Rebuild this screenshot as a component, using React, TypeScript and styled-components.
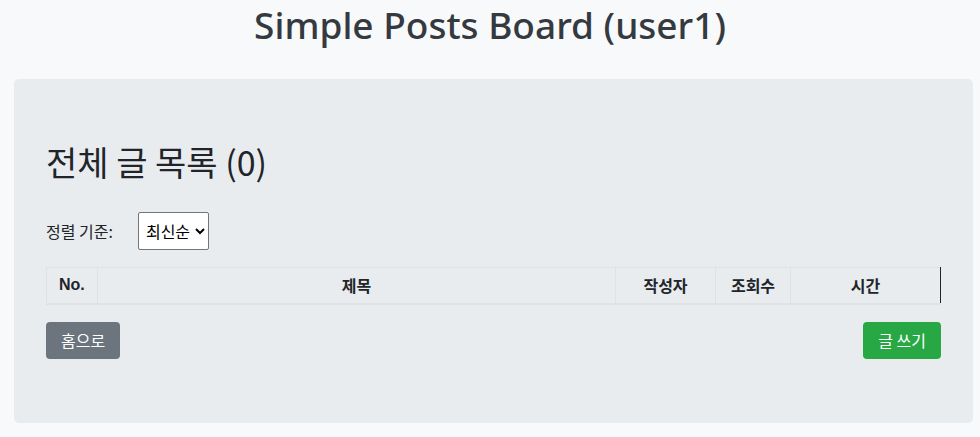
import React from 'react';
import styled, { createGlobalStyle } from 'styled-components';

const GlobalStyle = createGlobalStyle`
  body {
    margin: 0;
    background: #f8f9fa;
    color: #212529;
    font-family: "Noto Sans", "Noto Sans CJK KR", sans-serif;
  }
`;

const columns = [
  { key: 'no', label: 'No.', width: 50 },
  { key: 'title', label: '제목', width: undefined },
  { key: 'author', label: '작성자', width: 100 },
  { key: 'views', label: '조회수', width: 75 },
  { key: 'time', label: '시간', width: 150 },
];

export default function App() {
  return (
    <>
      <GlobalStyle />
      <Title>Simple Posts Board (user1)</Title>
      <Jumbotron>
        <ListHeading>전체 글 목록 (0)</ListHeading>
        <SortRow>
          <SortLabel>정렬 기준:</SortLabel>
          <SortSelect defaultValue="latest">
            <option value="latest">최신순</option>
            <option value="views">조회순</option>
          </SortSelect>
        </SortRow>
        <Table>
          <thead>
            <tr>
              {columns.map((c, i) => (
                <Th key={c.key} $width={c.width} $last={i === columns.length - 1} $latin={c.key === 'no'}>
                  {c.label}
                </Th>
              ))}
            </tr>
          </thead>
          <tbody />
        </Table>
        <ButtonRow>
          <Button $variant="secondary">홈으로</Button>
          <Button $variant="success">글 쓰기</Button>
        </ButtonRow>
      </Jumbotron>
    </>
  );
}

const Title = styled.h1`
  margin: 0 0 31px;
  padding-top: 1px;
  text-align: center;
  font-size: 37px;
  font-weight: 500;
  line-height: 47px;
  color: #343a40;
`;

const Jumbotron = styled.div`
  margin-left: 14px;
  width: 959px;
  box-sizing: border-box;
  padding: 64px 32px;
  background: #e9ecef;
  border-radius: 5px;
`;

const ListHeading = styled.h2`
  margin: 0 0 31px;
  font-size: 34px;
  font-weight: 400;
  line-height: 38px;
  font-family: "Noto Sans CJK KR", "Noto Sans", sans-serif;
`;

const SortRow = styled.div`
  display: flex;
  align-items: center;
  gap: 25px;
  margin-bottom: 17px;
`;

const SortLabel = styled.label`
  font-size: 16px;
  font-family: "Noto Sans CJK KR", sans-serif;
  color: #212529;
`;

const SortSelect = styled.select`
  height: 38px;
  padding: 0 1px 0 3px;
  font-size: 16px;
  font-family: "Noto Sans CJK KR", sans-serif;
  border: 1px solid #767676;
  border-radius: 2px;
  background: #fff;
  color: #000;
`;

const Table = styled.table`
  width: 100%;
  border-collapse: collapse;
  margin-bottom: 17px;
`;

const Th = styled.th<{ $width?: number; $last: boolean; $latin: boolean }>`
  width: ${({ $width }) => ($width ? `${$width}px` : 'auto')};
  height: 36px;
  box-sizing: border-box;
  padding: 0 12px;
  border: 1px solid #dee2e6;
  border-bottom: 2px solid #dee2e6;
  border-right: ${({ $last }) => ($last ? '1px solid #212529' : '1px solid #dee2e6')};
  font-size: 16px;
  font-weight: 700;
  text-align: center;
  font-family: ${({ $latin }) =>
    $latin ? '"Liberation Sans", Arial, sans-serif' : '"Noto Sans CJK KR", sans-serif'};
`;

const ButtonRow = styled.div`
  display: flex;
  justify-content: space-between;
`;

const Button = styled.button<{ $variant: 'secondary' | 'success' }>`
  height: 37px;
  padding: 0 15px;
  border: none;
  border-radius: 4px;
  font-size: 16px;
  font-family: "Noto Sans CJK KR", sans-serif;
  color: #fff;
  background: ${({ $variant }) => ($variant === 'success' ? '#28a745' : '#6c757d')};
`;
